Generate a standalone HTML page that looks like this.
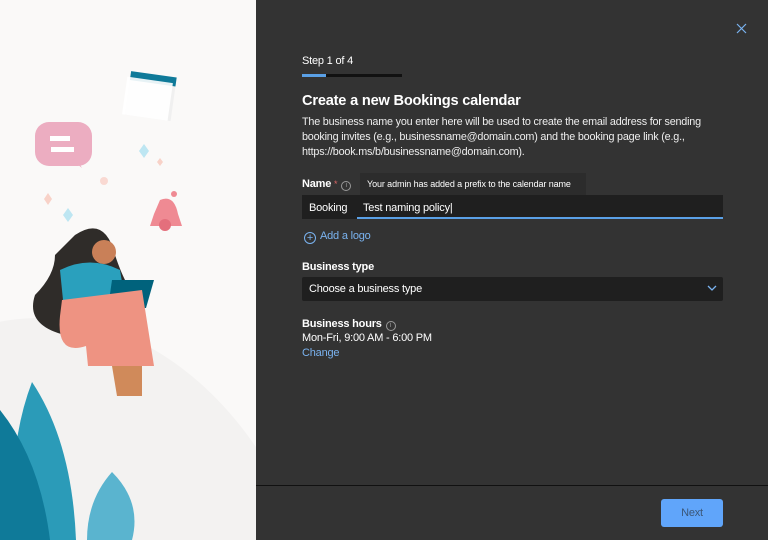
<!DOCTYPE html>
<html><head><style>
*{margin:0;padding:0;box-sizing:border-box}
html,body{width:768px;height:540px;overflow:hidden}
body{font-family:"Liberation Sans",sans-serif;background:#333;position:relative}
.l{position:absolute;left:0;top:0;width:256px;height:540px;background:#faf9f8;overflow:hidden}
.r{position:absolute;left:256px;top:0;width:512px;height:540px;background:#333;color:#fff;overflow:hidden;letter-spacing:-0.2px}
.t{position:absolute;white-space:nowrap}
</style></head><body>
<div class="l">
<svg width="256" height="540" viewBox="0 0 256 540">
<ellipse cx="40" cy="740" rx="300" ry="422" fill="#f3f2f1"/>
<g transform="rotate(8 150 95)"><rect x="128" y="76" width="46" height="42" fill="#f0f0f0"/><rect x="128" y="74" width="46" height="9" fill="#0f7a99"/><rect x="125" y="80" width="46" height="38" fill="#fff" opacity=".9"/></g>
<rect x="35" y="122" width="57" height="44" rx="14" fill="#ecadc1"/><path d="M72 160 L82 168 L76 158Z" fill="#ecadc1"/>
<rect x="50" y="136" width="20" height="5" fill="#fff"/><rect x="51" y="147" width="23" height="5" fill="#fff"/>
<path d="M144 144l5 7-5 7-5-7z" fill="#bde6f2"/><path d="M160 158l3 4-3 4-3-4z" fill="#f8d2c8"/>
<circle cx="104" cy="181" r="4" fill="#f9d9d2"/>
<path d="M48 193l4 6-4 6-4-6z" fill="#f8d2c8"/><path d="M68 208l5 7-5 7-5-7z" fill="#bde6f2"/>
<path d="M160 200 q14 -6 18 14 l4 12 h-32 l4-12z" fill="#ef8a93"/><circle cx="165" cy="225" r="6" fill="#e46f7c"/><circle cx="174" cy="194" r="3" fill="#ef8a93"/>
<path d="M75 235 q30 -20 40 20 q10 30 20 40 l-70 40 q-40 -10 -30 -40 q20 -20 20 -40z" fill="#2f2c29"/>
<circle cx="104" cy="252" r="12" fill="#c98058"/>
<path d="M60 270 q30 -15 60 0 l5 30 l-60 20z" fill="#2aa0bd"/>
<path d="M112 280 h42 l-8 28 h-38z" fill="#00627c"/>
<path d="M62 300 l80 -10 l12 76 h-66 l-2 -20 q-30 10 -26 -30z" fill="#ee9382"/>
<path d="M112 366 h30 l0 30 h-25z" fill="#d08a5a"/>
<path d="M32 382 q40 60 44 158 h-60 q-10 -90 16 -158z" fill="#2b9bb8"/>
<path d="M0 410 q40 50 50 130 h-50z" fill="#0f7a99"/>
<path d="M112 472 q30 30 20 68 h-45 q0 -40 25 -68z" fill="#5ab4cf"/>
</svg>
</div>
<div class="r">
<svg style="position:absolute;left:480px;top:23px" width="11" height="11"><path d="M1 1l9 9M10 1l-9 9" stroke="#7ab3f0" stroke-width="1.2"/></svg>
<div class="t" style="left:46px;top:55px;font-size:11px">Step 1 of 4</div>
<div style="position:absolute;left:46px;top:74px;width:100px;height:3px;background:#111"></div>
<div style="position:absolute;left:46px;top:74px;width:24px;height:3px;background:#5aa0e6"></div>
<div class="t" style="left:46px;top:93px;font-size:14.6px;font-weight:bold">Create a new Bookings calendar</div>
<div style="position:absolute;left:46px;top:115px;width:430px;font-size:10.8px;line-height:15px;color:#eee">The business name you enter here will be used to create the email address for sending booking invites (e.g., businessname@domain.com) and the booking page link (e.g., https://book.ms/b/businessname@domain.com).</div>
<div class="t" style="left:46px;top:178px;font-size:11px;font-weight:bold">Name <span style="color:#d66;font-weight:normal;font-size:9px">*</span> <span style="display:inline-block;width:10px;height:10px;border:1px solid #999;border-radius:50%;font-size:7px;color:#999;text-align:center;line-height:8px;font-weight:normal;margin-left:1px">i</span></div>
<div style="position:absolute;left:104px;top:173px;width:226px;height:22px;background:#2c2c2c;font-size:9px;line-height:22px;padding-left:7px;color:#fff;letter-spacing:-0.1px">Your admin has added a prefix to the calendar name</div>
<div style="position:absolute;left:46px;top:195px;width:421px;height:24px;background:#1f1f1f"></div>
<div class="t" style="left:53px;top:202px;font-size:11px">Booking</div>
<div style="position:absolute;left:101px;top:217px;width:366px;height:2px;background:#5aa0e6"></div>
<div class="t" style="left:107px;top:202px;font-size:11px">Test naming policy|</div>
<div class="t" style="left:48px;top:230px;font-size:11px;color:#7ab3f0"><span style="display:inline-block;width:12px;height:12px;border:1px solid #7ab3f0;border-radius:50%;text-align:center;line-height:10px;font-size:11px;vertical-align:-2px;margin-right:4px">+</span>Add a logo</div>
<div class="t" style="left:46px;top:261px;font-size:11px;font-weight:bold">Business type</div>
<div style="position:absolute;left:46px;top:277px;width:421px;height:24px;background:#1f1f1f;border-radius:2px;font-size:11px;line-height:24px;padding-left:7px">Choose a business type
<svg style="position:absolute;right:6px;top:8px" width="10" height="7"><path d="M1 1l4 4 4-4" stroke="#7ab3f0" stroke-width="1.3" fill="none"/></svg></div>
<div class="t" style="left:46px;top:318px;font-size:11px;font-weight:bold">Business hours <span style="display:inline-block;width:10px;height:10px;border:1px solid #999;border-radius:50%;font-size:7px;color:#999;text-align:center;line-height:8px;font-weight:normal;margin-left:1px">i</span></div>
<div class="t" style="left:46px;top:332px;font-size:11px">Mon-Fri, 9:00 AM - 6:00 PM</div>
<div class="t" style="left:46px;top:347px;font-size:11px;color:#7ab3f0">Change</div>
<div style="position:absolute;left:0;top:485px;width:512px;height:1px;background:#111"></div>
<div style="position:absolute;left:405px;top:499px;width:62px;height:28px;background:#60a5fa;border-radius:3px;font-size:11px;color:#3b5778;text-align:center;line-height:28px">Next</div>
</div>
</body></html>
